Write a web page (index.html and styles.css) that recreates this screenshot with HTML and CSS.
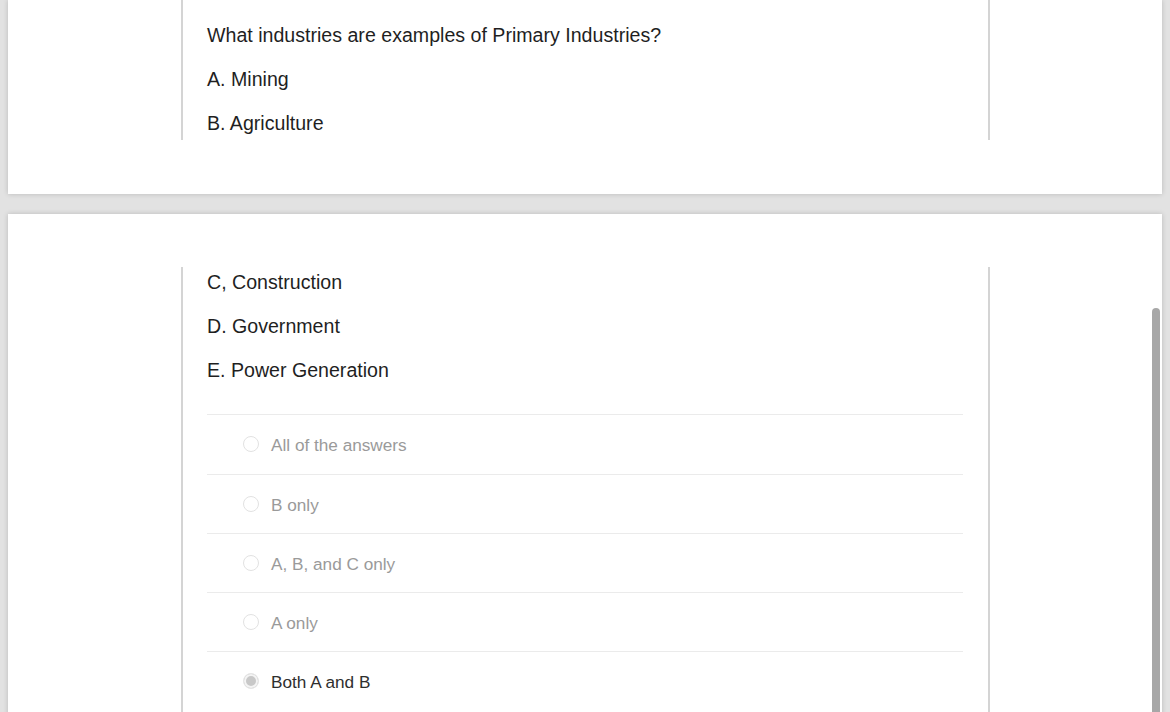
FILE: index.html
```html
<!DOCTYPE html>
<html lang="en">
<head>
    <meta charset="UTF-8">
    <meta name="viewport" content="width=device-width, initial-scale=1.0">
    <title>Quiz</title>
    <link rel="stylesheet" href="styles.css">
</head>
<body>
    <div class="page">
        <!-- Question card (top part) -->
        <div class="card card-top">
            <div class="column">
                <p class="line">What industries are examples of Primary Industries?</p>
                <p class="line">A. Mining</p>
                <p class="line">B. Agriculture</p>
            </div>
        </div>

        <!-- Question card (continued) -->
        <div class="card card-bottom">
            <div class="column column-open">
                <p class="line">C, Construction</p>
                <p class="line">D. Government</p>
                <p class="line">E. Power Generation</p>

                <ul class="answers">
                    <li class="answer"><span class="radio"></span>All of the answers</li>
                    <li class="answer"><span class="radio"></span>B only</li>
                    <li class="answer"><span class="radio"></span>A, B, and C only</li>
                    <li class="answer"><span class="radio"></span>A only</li>
                    <li class="answer selected"><span class="radio"></span>Both A and B</li>
                </ul>
            </div>
        </div>
    </div>

    <div class="scrollbar"></div>
</body>
</html>
```

FILE: styles.css
```css
body {
    margin: 0;
    padding: 0;
    font-family: "Liberation Sans", Arial, sans-serif;
    background-color: #e2e2e2;
    height: 712px;
    overflow: hidden;
}
.page {
    padding-left: 8px;
    width: 1154px;
}
.card {
    background-color: #fff;
    box-shadow: 0 0 5px rgba(0, 0, 0, 0.18);
}
.card-top {
    height: 194px;
}
.card-bottom {
    margin-top: 20px;
    padding-top: 53px;
    height: 700px;
}
.column {
    margin-left: 173px;
    width: 756px;
    padding: 21px 25px 3px 24px;
    border-left: 2px solid #d4d4d4;
    border-right: 2px solid #d4d4d4;
}
.column-open {
    padding-top: 1px;
    min-height: 640px;
}
.line {
    margin: 0 0 16px;
    font-size: 19.6px;
    line-height: 28px;
    color: #1f1f1f;
}
.line:last-of-type {
    margin-bottom: 0;
}
.answers {
    list-style: none;
    margin: 30px 0 0;
    padding: 0;
}
.answer {
    box-sizing: border-box;
    display: flex;
    align-items: center;
    height: 59px;
    padding-top: 2px;
    padding-left: 36px;
    border-top: 1px solid #ebebeb;
    font-size: 17.2px;
    color: #9a9a9a;
}
.answer:first-child {
    height: 60px;
}
.radio {
    width: 14px;
    height: 14px;
    border: 1px solid #e2e2e2;
    border-radius: 50%;
    margin-right: 12px;
    margin-top: -3px;
    background-color: #fff;
}
.selected {
    color: #2e2e2e;
}
.selected .radio {
    background-color: #c8c8c8;
    border-color: #e6e6e6;
    box-shadow: inset 0 0 0 2px #f4f4f4;
}
.scrollbar {
    position: absolute;
    top: 308px;
    left: 1152px;
    width: 8px;
    height: 420px;
    border-radius: 4px;
    background-color: #a7a7a7;
}
```
